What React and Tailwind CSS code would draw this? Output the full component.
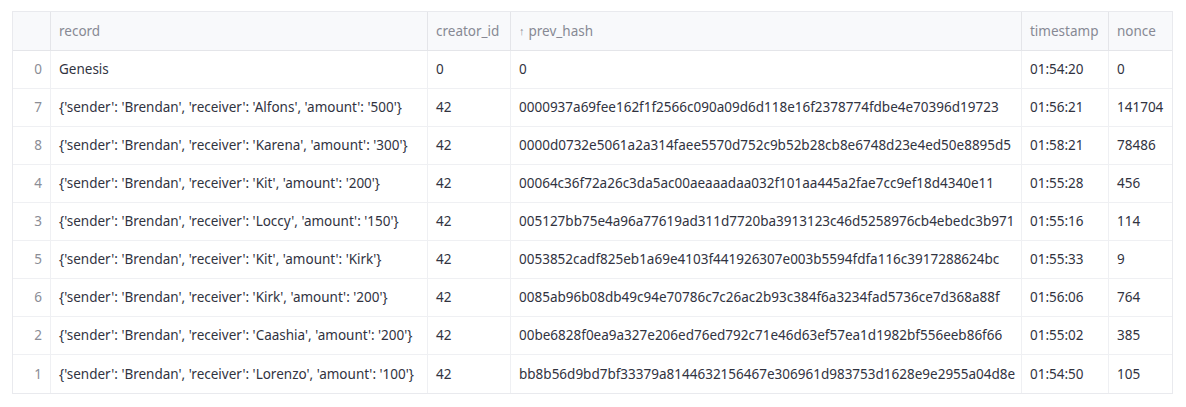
import React from "react";

const rows = [
  ["0", "Genesis", "0", "0", "01:54:20", "0"],
  ["7", "{'sender': 'Brendan', 'receiver': 'Alfons', 'amount': '500'}", "42", "0000937a69fee162f1f2566c090a09d6d118e16f2378774fdbe4e70396d19723", "01:56:21", "141704"],
  ["8", "{'sender': 'Brendan', 'receiver': 'Karena', 'amount': '300'}", "42", "0000d0732e5061a2a314faee5570d752c9b52b28cb8e6748d23e4ed50e8895d5", "01:58:21", "78486"],
  ["4", "{'sender': 'Brendan', 'receiver': 'Kit', 'amount': '200'}", "42", "00064c36f72a26c3da5ac00aeaaadaa032f101aa445a2fae7cc9ef18d4340e11", "01:55:28", "456"],
  ["3", "{'sender': 'Brendan', 'receiver': 'Loccy', 'amount': '150'}", "42", "005127bb75e4a96a77619ad311d7720ba3913123c46d5258976cb4ebedc3b971", "01:55:16", "114"],
  ["5", "{'sender': 'Brendan', 'receiver': 'Kit', 'amount': 'Kirk'}", "42", "0053852cadf825eb1a69e4103f441926307e003b5594fdfa116c3917288624bc", "01:55:33", "9"],
  ["6", "{'sender': 'Brendan', 'receiver': 'Kirk', 'amount': '200'}", "42", "0085ab96b08db49c94e70786c7c26ac2b93c384f6a3234fad5736ce7d368a88f", "01:56:06", "764"],
  ["2", "{'sender': 'Brendan', 'receiver': 'Caashia', 'amount': '200'}", "42", "00be6828f0ea9a327e206ed76ed792c71e46d63ef57ea1d1982bf556eeb86f66", "01:55:02", "385"],
  ["1", "{'sender': 'Brendan', 'receiver': 'Lorenzo', 'amount': '100'}", "42", "bb8b56d9bd7bf33379a8144632156467e306961d983753d1628e9e2955a04d8e", "01:54:50", "105"],
];

const headers = ["", "record", "creator_id", "prev_hash", "timestamp", "nonce"];

export default function App() {
  return (
    <div className="w-[1186px] h-[407px] bg-white pt-[11px] pl-[12px]" style={{ fontFamily: "'Noto Sans', sans-serif" }}>
      <div className="w-[1161px] border border-[#e9eaee] grid grid-cols-[38px_377px_83px_511px_87px_63px] text-[13.5px]">
        {headers.map((h, i) => (
          <div
            key={"h" + i}
            className={
              "h-[39px] bg-[#f8f9fb] border-b border-[#e4e5e9] flex items-center px-[8px] text-[#878994] " +
              (i < 5 ? "border-r" : "")
            }
          >
            {i === 3 ? (
              <span className="flex items-center gap-[4px]">
                <span className="text-[11px]">↑</span>
                <span>{h}</span>
              </span>
            ) : (
              h
            )}
          </div>
        ))}
        {rows.map((r, ri) =>
          r.map((c, ci) => (
            <div
              key={ri + "-" + ci}
              className={
                "h-[38px] flex items-center px-[8px] whitespace-nowrap overflow-hidden border-[#eff0f3] " +
                (ci < 5 ? "border-r " : "") +
                (ri < rows.length - 1 ? "border-b " : "") +
                (ci === 0 ? "justify-end text-[#8b8d96]" : "text-[#31333f]")
              }
            >
              {c}
            </div>
          ))
        )}
      </div>
    </div>
  );
}
